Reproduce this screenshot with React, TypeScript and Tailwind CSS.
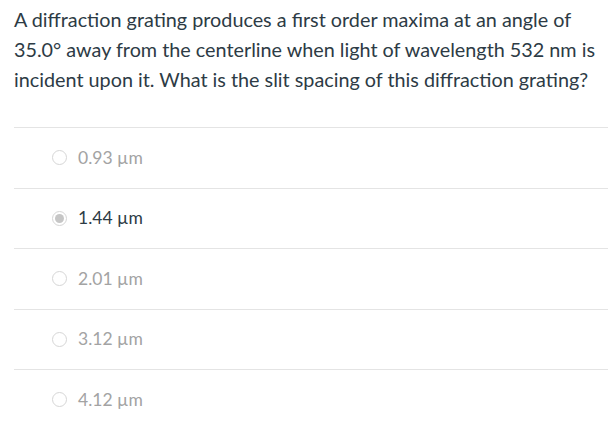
const answers = [
  { label: "0.93 µm", selected: false },
  { label: "1.44 µm", selected: true },
  { label: "2.01 µm", selected: false },
  { label: "3.12 µm", selected: false },
  { label: "4.12 µm", selected: false },
];

function Radio({ selected }: { selected: boolean }) {
  return (
    <span className="flex h-[15px] w-[15px] shrink-0 items-center justify-center rounded-full border border-[#d6d6d6] bg-white">
      {selected && <span className="h-[9px] w-[9px] rounded-full bg-[#c6c6c6]" />}
    </span>
  );
}

export default function App() {
  return (
    <div className="min-h-[436px] bg-white px-[14px] pt-[4px] font-['Lato','Noto_Sans',sans-serif] text-[#2d3b45]">
      <p className="w-[594px] text-[19.8px] leading-[30px]">
        A diffraction grating produces a first order maxima at an angle of 35.0° away from the
        centerline when light of wavelength 532 nm is incident upon it. What is the slit spacing
        of this diffraction grating?
      </p>

      <div className="mt-[33px] w-[594px]">
        {answers.map((a) => (
          <div
            key={a.label}
            className="flex h-[60.5px] items-center gap-[11px] border-t border-[#e4e4e4] pl-[38px]"
          >
            <Radio selected={a.selected} />
            <span
              className={
                "text-[17.5px] leading-5 " + (a.selected ? "text-[#2d3b45]" : "text-[#a3a3a3]")
              }
            >
              {a.label}
            </span>
          </div>
        ))}
      </div>
    </div>
  );
}
